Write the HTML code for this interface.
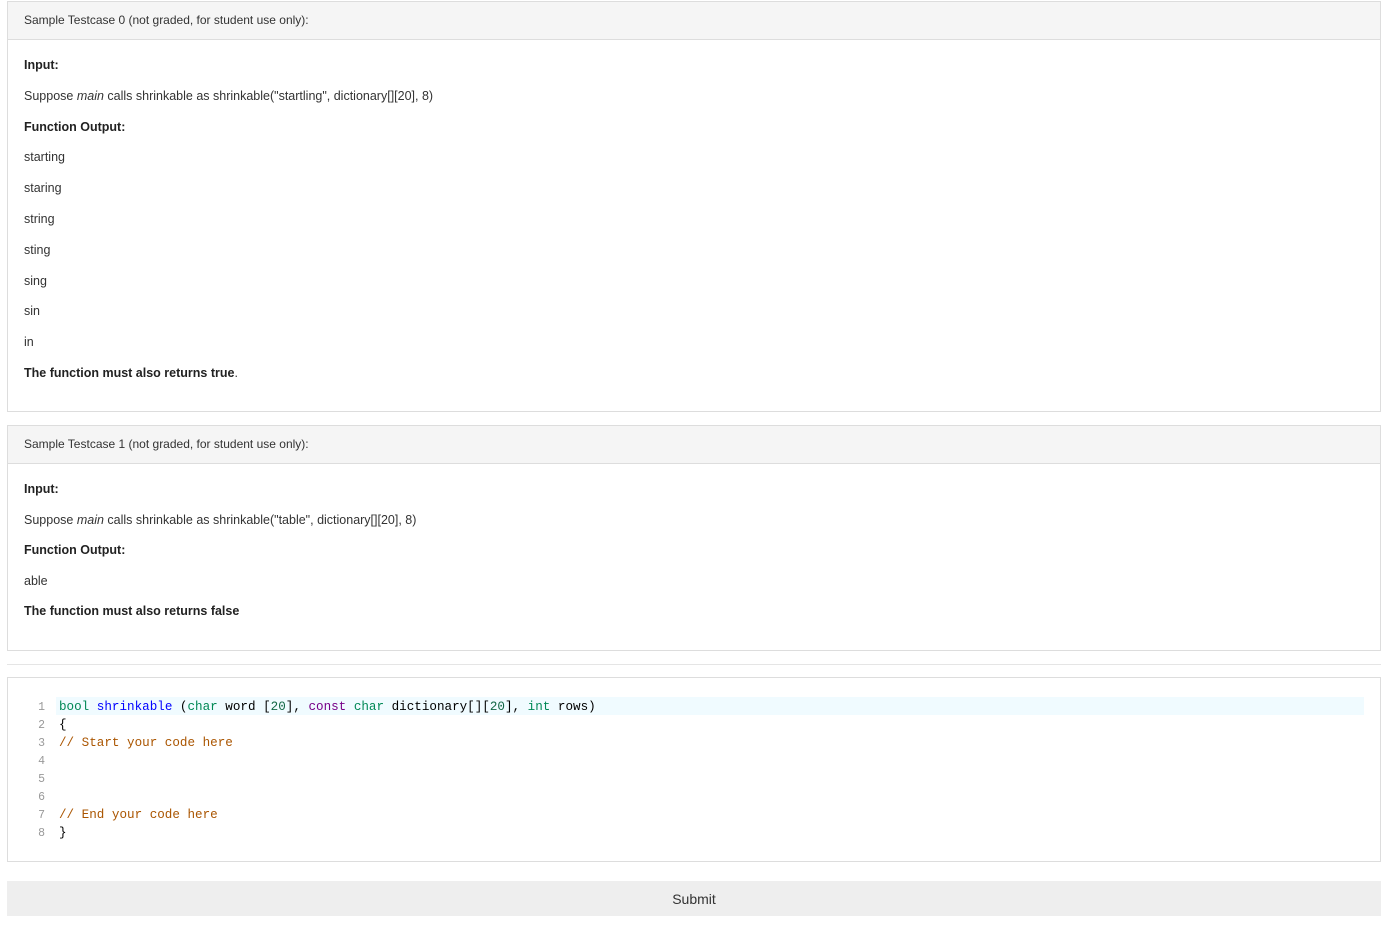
<!DOCTYPE html>
<html><head><meta charset="utf-8"><style>
body{margin:0;width:1389px;height:926px;background:#fff;font-family:"Liberation Sans",sans-serif;color:#333;position:relative;overflow:hidden}
.box{position:absolute;left:7px;width:1372px;border:1px solid #ddd;background:#fff}
.hd{height:37px;background:#f5f5f5;border-bottom:1px solid #ddd;font-size:12px;line-height:37px;padding-left:16px;color:#333}
.t{position:absolute;left:16px;font-size:12.5px;white-space:nowrap}
b{color:#222}
.ln{position:absolute;left:29px;width:8px;text-align:right;color:#999;font-family:"Liberation Mono",monospace;font-size:11.5px}
.cl{position:absolute;left:51px;white-space:pre;font-family:"Liberation Mono",monospace;font-size:12.6px;color:#000}
.k{color:#008855}.f{color:#0000ff}.p{color:#770088}.n{color:#116644}.c{color:#aa5500}
</style></head><body>
<div class="box" style="top:1px;height:409px">
<div class="hd">Sample Testcase 0 (not graded, for student use only):</div>
<div class="t" style="top:56px"><b>Input:</b></div>
<div class="t" style="top:87px">Suppose <i>main</i> calls shrinkable as shrinkable("startling", dictionary[][20], 8)</div>
<div class="t" style="top:118px"><b>Function Output:</b></div>
<div class="t" style="top:148px">starting</div>
<div class="t" style="top:179px">staring</div>
<div class="t" style="top:210px">string</div>
<div class="t" style="top:241px">sting</div>
<div class="t" style="top:272px">sing</div>
<div class="t" style="top:302px">sin</div>
<div class="t" style="top:333px">in</div>
<div class="t" style="top:364px"><b>The function must also returns true</b>.</div>
</div>
<div class="box" style="top:425px;height:224px">
<div class="hd">Sample Testcase 1 (not graded, for student use only):</div>
<div class="t" style="top:56px"><b>Input:</b></div>
<div class="t" style="top:87px">Suppose <i>main</i> calls shrinkable as shrinkable("table", dictionary[][20], 8)</div>
<div class="t" style="top:117px"><b>Function Output:</b></div>
<div class="t" style="top:148px">able</div>
<div class="t" style="top:178px"><b>The function must also returns false</b></div>
</div>
<div style="position:absolute;left:7px;top:664px;width:1374px;height:1px;background:#e5e5e5"></div>
<div class="box" style="top:677px;height:183px">
<div style="position:absolute;left:48px;top:19px;width:1308px;height:18px;background:#f0fbff"></div>
<div class="ln" style="top:23px">1</div><div class="cl" style="top:22px"><span class="k">bool</span> <span class="f">shrinkable</span> (<span class="k">char</span> word [<span class="n">20</span>], <span class="p">const</span> <span class="k">char</span> dictionary[][<span class="n">20</span>], <span class="k">int</span> rows)</div>
<div class="ln" style="top:41px">2</div><div class="cl" style="top:40px">{</div>
<div class="ln" style="top:59px">3</div><div class="cl c" style="top:58px">// Start your code here</div>
<div class="ln" style="top:77px">4</div>
<div class="ln" style="top:95px">5</div>
<div class="ln" style="top:113px">6</div>
<div class="ln" style="top:131px">7</div><div class="cl c" style="top:130px">// End your code here</div>
<div class="ln" style="top:149px">8</div><div class="cl" style="top:148px">}</div>
</div>
<div style="position:absolute;left:7px;top:881px;width:1374px;height:35px;background:#eee;text-align:center;line-height:37px;font-size:14px;color:#333">Submit</div>
</body></html>
